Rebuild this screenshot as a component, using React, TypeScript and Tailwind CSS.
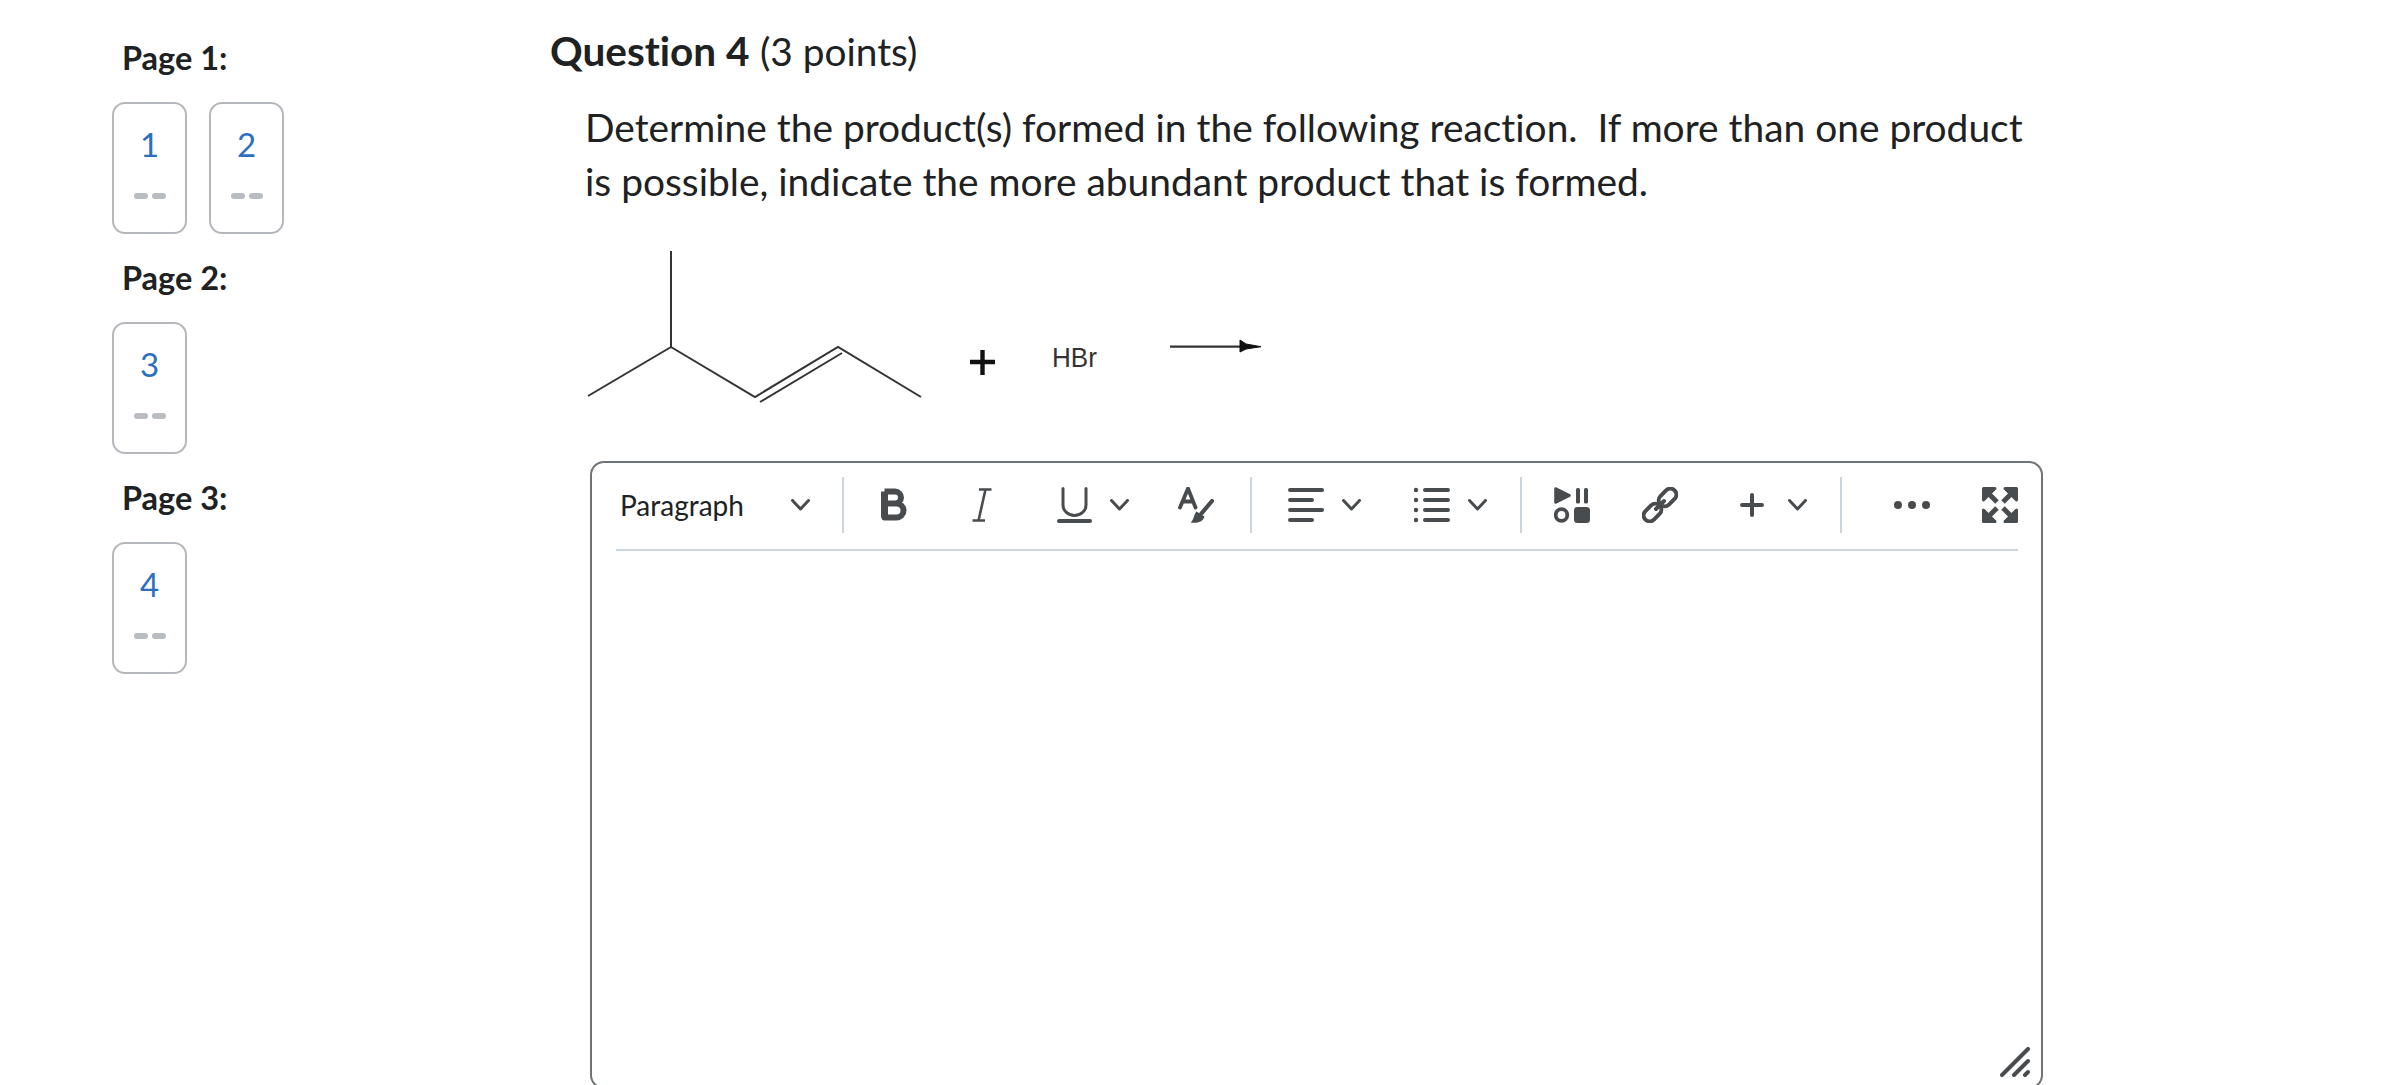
const ink = "#494c4e";

function Chevron() {
  return (
    <svg width="19" height="12" viewBox="0 0 19 12" className="shrink-0">
      <path d="M1.5 1.5 L9.5 10 L17.5 1.5" fill="none" stroke={ink} strokeWidth="3" strokeLinecap="round" strokeLinejoin="round" />
    </svg>
  );
}

function Divider({ className }: { className: string }) {
  return <div className={`h-[56px] w-[2px] shrink-0 bg-[#cdd5dc] ${className}`} />;
}

function BoldIcon() {
  return (
    <svg width="26" height="36" viewBox="0 0 26 36" className="shrink-0">
      <path d="M3.5 4.5 H14 a6 6 0 0 1 0 12 H3.5 M3.5 16.5 H15.5 a7 7 0 0 1 0 14 H3.5 Z" fill="none" stroke={ink} strokeWidth="6" strokeLinejoin="round" />
      <path d="M3.5 4.5 V30.5" fill="none" stroke={ink} strokeWidth="7" />
    </svg>
  );
}

function ItalicIcon() {
  return (
    <svg width="20" height="36" viewBox="0 0 20 36" className="shrink-0">
      <path d="M7 2.5 H19.5 M0.5 33.5 H13 M13.5 2.5 L6.5 33.5" fill="none" stroke={ink} strokeWidth="2.6" />
    </svg>
  );
}

function UnderlineIcon() {
  return (
    <svg width="35" height="36" viewBox="0 0 35 36" className="shrink-0">
      <path d="M6 1.5 V18 a11.5 10.5 0 0 0 23 0 V1.5" fill="none" stroke={ink} strokeWidth="3" strokeLinecap="round" />
      <path d="M2 34 H33" fill="none" stroke={ink} strokeWidth="4" strokeLinecap="round" />
    </svg>
  );
}

function FontColorIcon() {
  return (
    <svg width="36" height="36" viewBox="0 0 36 36" className="shrink-0">
      <path d="M2 20.5 L10 1.5 L17.5 20.5 M5 14.5 H15" fill="none" stroke={ink} strokeWidth="3.8" strokeLinecap="round" strokeLinejoin="round" />
      <path d="M34 14 L23 27" fill="none" stroke={ink} strokeWidth="4.2" strokeLinecap="round" />
      <path d="M18.5 24.5 L26.5 29.5 C25 34.5 21 36.5 12.5 35.5 C16 33.5 15.5 27.5 18.5 24.5 Z" fill={ink} />
    </svg>
  );
}

function AlignIcon() {
  return (
    <svg width="36" height="36" viewBox="0 0 36 36" className="shrink-0">
      <path d="M2 3 H34 M2 13 H24 M2 23 H34 M2 33 H24" fill="none" stroke={ink} strokeWidth="4" strokeLinecap="round" />
    </svg>
  );
}

function ListIcon() {
  return (
    <svg width="36" height="36" viewBox="0 0 36 36" className="shrink-0">
      <path d="M11 3 H34 M11 13 H34 M11 23 H34 M11 33 H34" fill="none" stroke={ink} strokeWidth="4" strokeLinecap="round" />
      <g fill={ink}>
        <circle cx="2" cy="3" r="2.2" />
        <circle cx="2" cy="13" r="2.2" />
        <circle cx="2" cy="23" r="2.2" />
        <circle cx="2" cy="33" r="2.2" />
      </g>
    </svg>
  );
}

function MediaIcon() {
  return (
    <svg width="36" height="36" viewBox="0 0 36 36" className="shrink-0">
      <path d="M1.5 1.5 L15.5 8.5 L1.5 15.5 Z" fill={ink} stroke={ink} strokeWidth="2.6" strokeLinejoin="round" />
      <rect x="22" y="1" width="4" height="15.5" rx="1.6" fill={ink} />
      <rect x="30" y="1" width="4" height="15.5" rx="1.6" fill={ink} />
      <circle cx="7.5" cy="28" r="5.8" fill="none" stroke={ink} strokeWidth="3.8" />
      <rect x="20" y="20" width="16" height="16" rx="3.5" fill={ink} />
    </svg>
  );
}

function LinkIcon() {
  return (
    <svg width="36" height="36" viewBox="0 0 36 36" className="shrink-0">
      <g fill="none" stroke={ink} strokeWidth="4">
        <rect x="-10" y="-6" width="20" height="12" rx="6" transform="translate(10.5 25.5) rotate(-45)" />
        <rect x="-10" y="-6" width="20" height="12" rx="6" transform="translate(25.5 10.5) rotate(-45)" />
      </g>
      <path d="M14 22 L22 14" fill="none" stroke={ink} strokeWidth="4" strokeLinecap="round" />
    </svg>
  );
}

function PlusIcon() {
  return (
    <svg width="24" height="24" viewBox="0 0 24 24" className="shrink-0">
      <path d="M2 12 H22 M12 2 V22" fill="none" stroke={ink} strokeWidth="4" strokeLinecap="round" />
    </svg>
  );
}

function DotsIcon() {
  return (
    <svg width="36" height="10" viewBox="0 0 36 10" className="shrink-0">
      <g fill={ink}>
        <circle cx="4" cy="5" r="4" />
        <circle cx="18" cy="5" r="4" />
        <circle cx="32" cy="5" r="4" />
      </g>
    </svg>
  );
}

function FullscreenIcon() {
  const corner = (
    <g fill={ink} stroke={ink} strokeLinejoin="round">
      <path d="M1.5 1.5 H13 L1.5 13 Z" strokeWidth="3" />
      <path d="M5 5 L15 15" strokeWidth="5" strokeLinecap="butt" />
    </g>
  );
  return (
    <svg width="36" height="36" viewBox="0 0 36 36" className="shrink-0">
      {corner}
      <g transform="translate(36 0) scale(-1 1)">{corner}</g>
      <g transform="translate(0 36) scale(1 -1)">{corner}</g>
      <g transform="translate(36 36) scale(-1 -1)">{corner}</g>
    </svg>
  );
}

function ReactionDrawing() {
  return (
    <svg width="700" height="180" viewBox="0 0 700 180" className="block">
      <g transform="translate(-585 -240)" fill="none" stroke="#333" strokeWidth="2">
        <path d="M671 251 V347 L588 396 M671 347 L755 397 L838 347 L921 397" />
        <path d="M760 402 L842 353" />
        <path d="M1170 346.7 H1245" strokeWidth="2.2" />
        <path d="M970 362 H995 M982.5 350 V375" stroke="#111" strokeWidth="4.4" />
        <path d="M1240 340 L1246 344 L1261 346.7 L1246 349 L1240 352 Z" fill="#111" stroke="#111" strokeWidth="1" />
        <text x="1052" y="367" fontFamily="'Liberation Sans', Arial, sans-serif" fontSize="28" textLength="45" lengthAdjust="spacingAndGlyphs" fill="#333" stroke="none">
          HBr
        </text>
      </g>
    </svg>
  );
}

function QuestionLink({ n }: { n: number }) {
  return (
    <div className="flex h-[132px] w-[75px] flex-col items-center rounded-[13px] border-2 border-[#b4b8bd] pt-[20px]">
      <span className="text-[33px] leading-[40px] text-[#2a6fc0]">{n}</span>
      <div className="mt-[29px] flex gap-[4px]">
        <span className="h-[6px] w-[14px] rounded-full bg-[#b9bdc1]" />
        <span className="h-[6px] w-[14px] rounded-full bg-[#b9bdc1]" />
      </div>
    </div>
  );
}

const pages = [
  { label: "Page 1:", questions: [1, 2] },
  { label: "Page 2:", questions: [3] },
  { label: "Page 3:", questions: [4] },
];

export default function App() {
  return (
    <div className="flex h-[1085px] overflow-hidden bg-white font-['Lato',sans-serif] text-[#202122] [font-variant-ligatures:none]">
      <aside className="w-[550px] shrink-0 pl-[112px] pt-[14px]">
        {pages.map((page) => (
          <div key={page.label}>
            <div className="flex h-[88px] items-center pl-[10px] text-[32.5px] font-bold">{page.label}</div>
            <div className="flex gap-[22px]">
              {page.questions.map((n) => (
                <QuestionLink key={n} n={n} />
              ))}
            </div>
          </div>
        ))}
      </aside>

      <main className="w-[1493px] shrink-0 pt-[26px]">
        <h2 className="text-[40.5px] leading-[50px]">
          <span className="font-bold">Question 4</span> <span className="text-[38.8px]">(3 points)</span>
        </h2>
        <div className="pl-[35px]">
          <p className="mt-[24px] w-[1445px] text-[38.9px] leading-[54px]">
            Determine the product(s) formed in the following reaction.&nbsp; If more than one product is possible, indicate the more abundant product that is formed.
          </p>
          <div className="mt-[32px]">
            <ReactionDrawing />
          </div>
          <section className="relative ml-[5px] mt-[41px] h-[628px] w-[1453px] rounded-[14px] border-2 border-[#6e7477]">
            <div className="ml-[24px] mr-[23px] flex h-[88px] items-center border-b-2 border-[#cdd5dc] pb-[2px] pl-[4px]">
              <span className="w-[123px] shrink-0 text-[28px]">Paragraph</span>
              <div className="ml-[48px]"><Chevron /></div>
              <Divider className="ml-[32px]" />
              <div className="ml-[37px]"><BoldIcon /></div>
              <div className="ml-[65px]"><ItalicIcon /></div>
              <div className="ml-[65px]"><UnderlineIcon /></div>
              <div className="ml-[18px]"><Chevron /></div>
              <div className="ml-[49px]"><FontColorIcon /></div>
              <Divider className="ml-[36px]" />
              <div className="ml-[36px]"><AlignIcon /></div>
              <div className="ml-[18px]"><Chevron /></div>
              <div className="ml-[53px]"><ListIcon /></div>
              <div className="ml-[18px]"><Chevron /></div>
              <Divider className="ml-[33px]" />
              <div className="ml-[32px]"><MediaIcon /></div>
              <div className="ml-[52px]"><LinkIcon /></div>
              <div className="ml-[62px]"><PlusIcon /></div>
              <div className="ml-[24px]"><Chevron /></div>
              <Divider className="ml-[33px]" />
              <div className="ml-[52px]"><DotsIcon /></div>
              <div className="ml-[52px]"><FullscreenIcon /></div>
            </div>
            <svg width="30" height="30" viewBox="0 0 30 30" className="absolute right-[11px] bottom-[10px]">
              <path d="M2 28 L28 2 M14 28 L28 14 M25 28 L28 25" fill="none" stroke={ink} strokeWidth="4" strokeLinecap="round" />
            </svg>
          </section>
        </div>
      </main>
    </div>
  );
}
